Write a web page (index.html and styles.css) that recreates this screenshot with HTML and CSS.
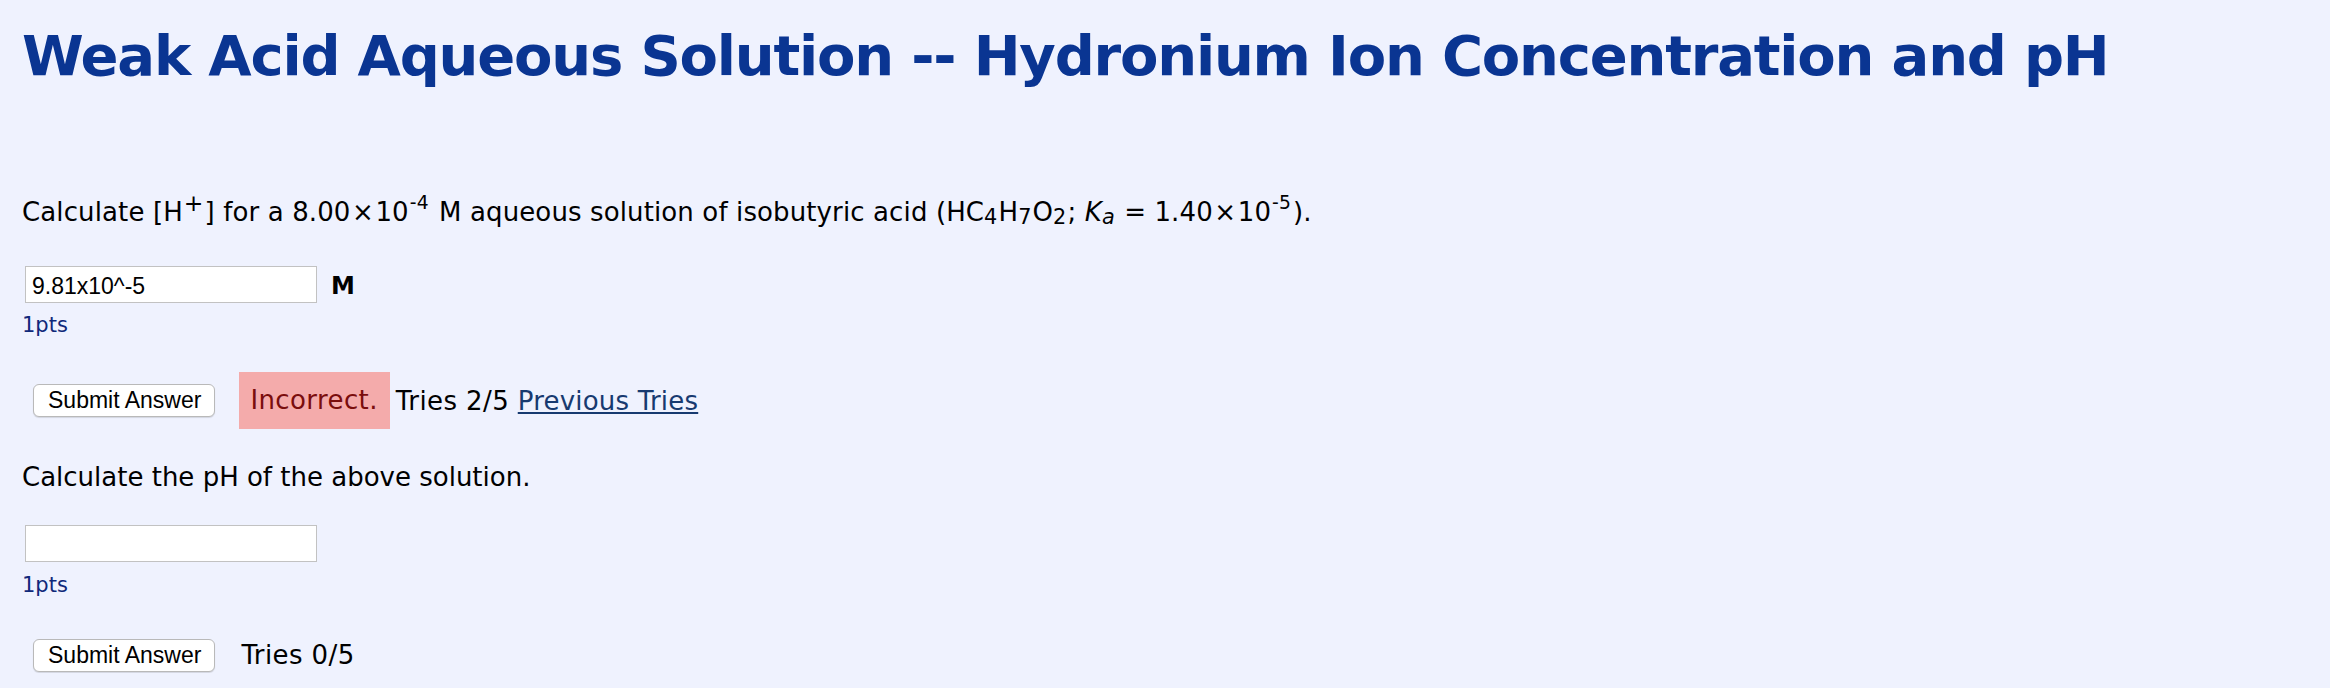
FILE: index.html
```html
<!DOCTYPE html>
<html lang="en">
<head>
<meta charset="utf-8">
<title>Weak Acid Aqueous Solution -- Hydronium Ion Concentration and pH</title>
<link rel="stylesheet" href="styles.css">
</head>
<body>
<div class="page">
  <h1 class="title">Weak Acid Aqueous Solution -- Hydronium Ion Concentration and pH</h1>

  <p class="question q1">Calculate [H<sup class="plus">+</sup>] for a 8.00<span class="times">×</span>10<sup>-4</sup> M aqueous solution of isobutyric acid (HC<sub>4</sub>H<sub>7</sub>O<sub>2</sub>; <i>K<sub>a</sub></i> = 1.40<span class="times">×</span>10<sup>-5</sup>).</p>

  <div class="answer-row r1">
    <input class="answer" type="text" value="9.81x10^-5">
    <span class="unit">M</span>
  </div>
  <div class="pts">1pts</div>

  <div class="submit-row s1">
    <button class="submit" type="button">Submit Answer</button>
    <span class="incorrect">Incorrect.</span>
    <span class="tries tight">Tries 2/5 <a class="prev" href="#">Previous Tries</a></span>
  </div>

  <p class="question q2">Calculate the pH of the above solution.</p>

  <div class="answer-row r2">
    <input class="answer" type="text" value="">
  </div>
  <div class="pts p2">1pts</div>

  <div class="submit-row s2">
    <button class="submit" type="button">Submit Answer</button>
    <span class="tries">Tries 0/5</span>
  </div>
</div>
</body>
</html>
```

FILE: styles.css
```css
html, body {
  margin: 0;
  padding: 0;
  background: #eff2fe;
}

body {
  font-family: "DejaVu Sans", Verdana, sans-serif;
  color: #000;
}

.page {
  padding: 23px 0 0 22px;
}

.title {
  margin: 0;
  font-family: "DejaVu Sans", Verdana, sans-serif;
  font-weight: bold;
  font-size: 56px;
  line-height: 66px;
  letter-spacing: -1.2px;
  color: #0a3592;
  white-space: nowrap;
}

.question {
  margin: 0;
  font-size: 26px;
  line-height: 36px;
  white-space: nowrap;
}

.q1 {
  margin-top: 105px;
  letter-spacing: 0.12px;
}

.q2 { margin-top: 30px; }

.times {
  margin: 0 1.5px;
}

sup, sub {
  line-height: 0;
  position: relative;
  vertical-align: baseline;
}

sup {
  font-size: 72%;
  top: -0.62em;
  margin: 0 2px 0 1px;
}

sup.plus {
  font-size: 90%;
  top: -0.42em;
  margin: 0 1px;
}

sub {
  font-size: 80%;
  top: 0.14em;
  margin-right: 1px;
}

.answer-row {
  display: flex;
  align-items: baseline;
  height: 37px;
}

.r1 { margin-top: 36px; }
.r2 { margin-top: 30px; }

.answer {
  box-sizing: border-box;
  width: 292px;
  height: 37px;
  margin: 0 0 0 3px;
  padding: 3px 6px 0;
  border: 1px solid #c2c2c2;
  border-radius: 0;
  background: #fff;
  font-family: "Liberation Sans", Arial, sans-serif;
  font-size: 23px;
  color: #000;
  outline: none;
}

.unit {
  margin-left: 14px;
  font-weight: bold;
  font-size: 24px;
  line-height: 28px;
}

.pts {
  margin-top: 10px;
  font-size: 21px;
  line-height: 25px;
  color: #10287a;
}

.p2 { margin-top: 11px; }

.submit-row {
  display: flex;
  align-items: center;
}

.s1 { margin-top: 34px; }
.s2 { margin-top: 39px; }

.submit {
  box-sizing: border-box;
  height: 33px;
  margin: 0 0 0 11px;
  padding: 0 13px 0 14px;
  border: 1px solid #b9b9b9;
  border-radius: 6px;
  background: #fff;
  box-shadow: 0 1px 1px rgba(0, 0, 0, 0.12);
  font-family: "Liberation Sans", Arial, sans-serif;
  font-size: 23px;
  color: #000;
  white-space: nowrap;
}

.incorrect {
  margin-left: 24px;
  padding: 0 12px 0 11px;
  background: #f4abab;
  color: #7a0d0d;
  font-size: 26px;
  line-height: 57px;
  letter-spacing: 0.4px;
}

.tries {
  margin-left: 26px;
  font-size: 26px;
  line-height: 36px;
  letter-spacing: 0.4px;
  white-space: nowrap;
}

.tries.tight { margin-left: 6px; }

.prev {
  color: #173a70;
  letter-spacing: 0.2px;
  text-decoration: underline;
  text-underline-offset: 2px;
  text-decoration-thickness: 2px;
}
```
